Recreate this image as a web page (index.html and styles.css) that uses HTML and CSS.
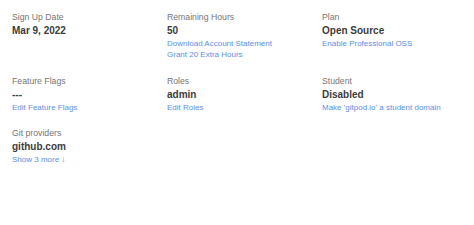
FILE: index.html
```html
<!DOCTYPE html>
<html lang="en">
<head>
    <meta charset="UTF-8">
    <meta name="viewport" content="width=device-width, initial-scale=1.0">
    <title>User Detail</title>
    <link rel="stylesheet" href="styles.css">
</head>
<body>
    <div class="details">
        <div class="property">
            <div class="label">Sign Up Date</div>
            <div class="value">Mar 9, 2022</div>
        </div>
        <div class="property">
            <div class="label">Remaining Hours</div>
            <div class="value">50</div>
            <a class="action" href="#">Download Account Statement</a>
            <a class="action" href="#">Grant 20 Extra Hours</a>
        </div>
        <div class="property">
            <div class="label">Plan</div>
            <div class="value">Open Source</div>
            <a class="action" href="#">Enable Professional OSS</a>
        </div>

        <div class="property">
            <div class="label">Feature Flags</div>
            <div class="value">---</div>
            <a class="action" href="#">Edit Feature Flags</a>
        </div>
        <div class="property">
            <div class="label">Roles</div>
            <div class="value">admin</div>
            <a class="action" href="#">Edit Roles</a>
        </div>
        <div class="property">
            <div class="label">Student</div>
            <div class="value">Disabled</div>
            <a class="action" href="#">Make 'gitpod.io' a student domain</a>
        </div>

        <div class="property">
            <div class="label">Git providers</div>
            <div class="value">github.com</div>
            <a class="action" href="#">Show 3 more ↓</a>
        </div>
    </div>
</body>
</html>
```

FILE: styles.css
```css
body {
    margin: 0;
    background: #fff;
    font-family: "Liberation Sans", Arial, sans-serif;
}

.details {
    display: grid;
    grid-template-columns: repeat(3, 155px);
    row-gap: 14px;
    padding: 11px 0 0 12px;
}

.property {
    display: flex;
    flex-direction: column;
    align-items: flex-start;
}

.label {
    font-size: 8.7px;
    line-height: 13px;
    color: #767676;
}

.value {
    font-size: 10px;
    line-height: 14px;
    font-weight: bold;
    color: #3c3c3c;
}

.action {
    font-size: 8px;
    line-height: 11.3px;
    color: #5b8fe3;
    text-decoration: none;
}
```
